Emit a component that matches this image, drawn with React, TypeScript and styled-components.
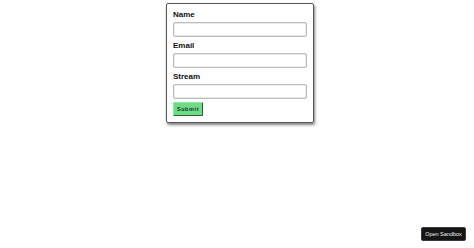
import styled, { createGlobalStyle } from "styled-components";

const GlobalStyle = createGlobalStyle`
  html, body {
    margin: 0;
    padding: 0;
    background: #ffffff;
    font-family: "Liberation Sans", Arial, sans-serif;
  }
`;

const Page = styled.div`
  width: 474px;
  height: 248px;
  position: relative;
  display: flex;
  justify-content: center;
  align-items: flex-start;
  padding-top: 3px;
  padding-left: 6px;
  box-sizing: border-box;
`;

const FormCard = styled.form`
  width: 148px;
  height: 120px;
  box-sizing: border-box;
  border: 1px solid #555;
  border-radius: 2px;
  box-shadow: 1px 2px 3px rgba(0, 0, 0, 0.5);
  padding: 6px 6px 0 6px;
  display: flex;
  flex-direction: column;
  align-items: flex-start;
`;

const Label = styled.label`
  display: block;
  font-size: 8px;
  font-weight: 700;
  color: #111;
  line-height: 10px;
  height: 10px;
`;

const Input = styled.input`
  display: block;
  width: 134px;
  height: 15px;
  box-sizing: border-box;
  border: 1px solid #bcbcbc;
  border-radius: 2px;
  box-shadow: inset 0 0 0 0.5px #d4d4d4;
  margin: 2px 0 4px 0;
  padding: 0 3px;
  font-size: 7px;
  background: #fff;
  outline: none;
`;

const SubmitButton = styled.button`
  display: block;
  margin-top: -1px;
  width: 30px;
  height: 14px;
  box-sizing: border-box;
  background: #6edc87;
  border-top: 1px solid #8fe8a3;
  border-left: 1px solid #8fe8a3;
  border-right: 1.5px solid #2f5e3a;
  border-bottom: 1.5px solid #2f5e3a;
  border-radius: 1px;
  font-family: "Liberation Sans", Arial, sans-serif;
  font-size: 5.5px;
  font-weight: 700;
  letter-spacing: 0.6px;
  color: #16301d;
  padding: 0;
`;

const SandboxButton = styled.button`
  position: absolute;
  right: 8px;
  bottom: 7px;
  width: 45px;
  height: 14px;
  background: #151515;
  border: 1px solid #3a3a3a;
  border-radius: 2px;
  color: #f2f2f2;
  font-family: "Liberation Sans", Arial, sans-serif;
  font-size: 5.5px;
  padding: 0;
`;

export default function App() {
  return (
    <>
      <GlobalStyle />
      <Page>
        <FormCard onSubmit={(e) => e.preventDefault()}>
          <Label>Name</Label>
          <Input type="text" />
          <Label>Email</Label>
          <Input type="email" />
          <Label>Stream</Label>
          <Input type="text" />
          <SubmitButton type="submit">Submit</SubmitButton>
        </FormCard>
        <SandboxButton>Open Sandbox</SandboxButton>
      </Page>
    </>
  );
}
